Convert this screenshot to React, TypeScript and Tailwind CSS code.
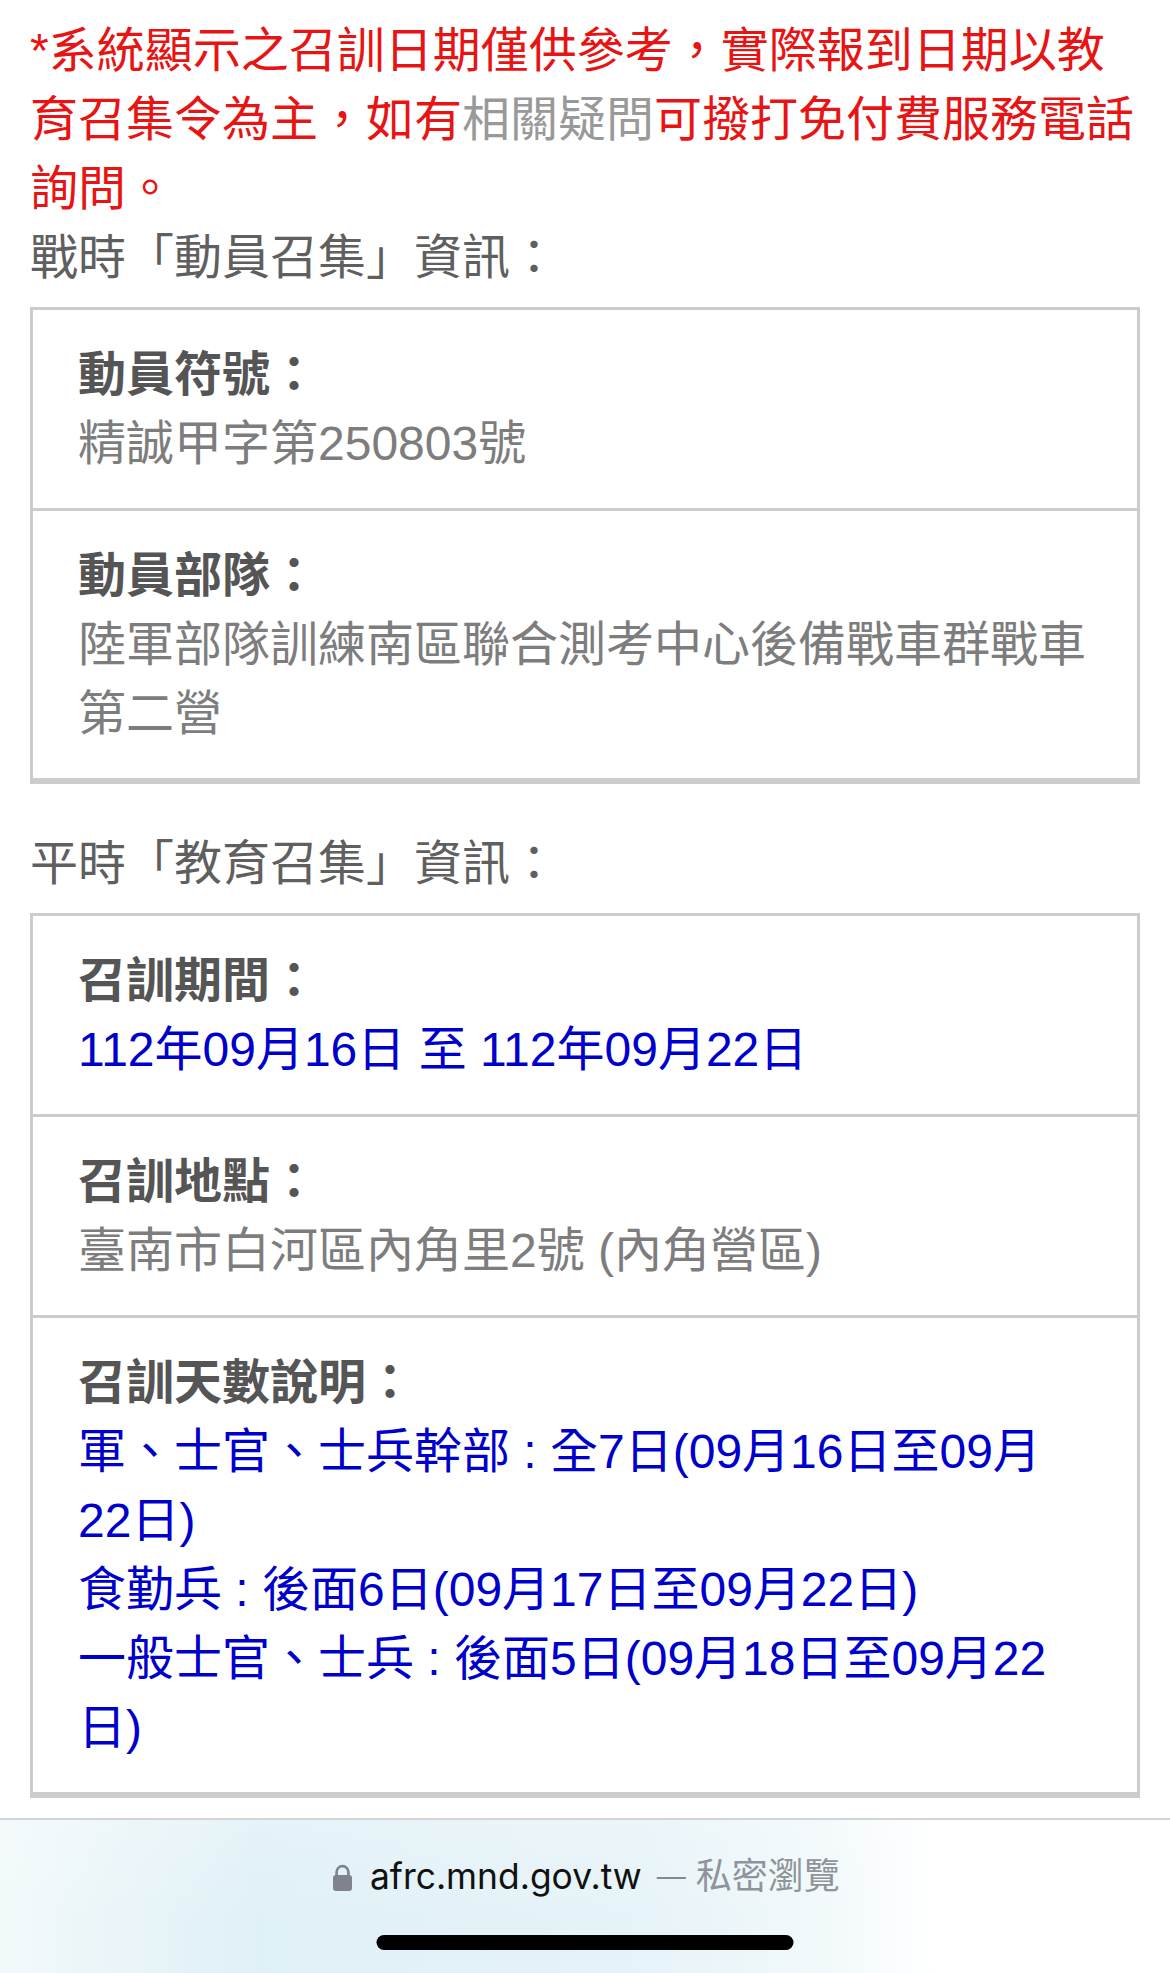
import React from "react";

function Cell({ label, children }: { label: string; children: React.ReactNode }) {
  return (
    <div className="pl-[45px] pr-[47px] pt-[30px] pb-[30px] text-[48px] leading-[69px]">
      <div className="font-bold text-[#555555]">{label}</div>
      {children}
    </div>
  );
}

export default function App() {
  return (
    <div className="font-['Liberation_Sans','Noto_Sans_CJK_TC',sans-serif] w-[1170px] h-[1973px] bg-white overflow-hidden flex flex-col">
      <div className="flex-1 pl-[30px] pr-[30px] pt-[16px] text-[48px] leading-[69px]">
        <div className="text-[#e81414]">
          *系統顯示之召訓日期僅供參考，實際報到日期以教育召集令為主，如有<span className="text-[#999999]">相關疑問</span>可撥打免付費服務電話詢問。
        </div>
        <div className="text-[#5f5f5f]">戰時「動員召集」資訊：</div>
        <div className="mt-[15px] border-[3px] border-[#cccccc] border-b-[6px]">
          <Cell label="動員符號：">
            <div className="text-[#7d7d7d]">精誠甲字第250803號</div>
          </Cell>
          <div className="border-t-[3px] border-[#cccccc]">
            <Cell label="動員部隊：">
              <div className="text-[#7d7d7d]">陸軍部隊訓練南區聯合測考中心後備戰車群戰車第二營</div>
            </Cell>
          </div>
        </div>
        <div className="mt-[45px] text-[#5f5f5f]">平時「教育召集」資訊：</div>
        <div className="mt-[15px] border-[3px] border-[#cccccc] border-b-[6px]">
          <Cell label="召訓期間：">
            <div className="text-[#0000cc]">112年09月16日 至 112年09月22日</div>
          </Cell>
          <div className="border-t-[3px] border-[#cccccc]">
            <Cell label="召訓地點：">
              <div className="text-[#7d7d7d]">臺南市白河區內角里2號 (內角營區)</div>
            </Cell>
          </div>
          <div className="border-t-[3px] border-[#cccccc]">
            <Cell label="召訓天數說明：">
              <div className="text-[#0000cc]">
                <div>軍、士官、士兵幹部 : 全7日(09月16日至09月22日)</div>
                <div>食勤兵 : 後面6日(09月17日至09月22日)</div>
                <div>一般士官、士兵 : 後面5日(09月18日至09月22日)</div>
              </div>
            </Cell>
          </div>
        </div>
      </div>
      <div className="relative h-[155px] shrink-0 border-t-2 border-[#d2d5d8] bg-[linear-gradient(180deg,rgba(255,255,255,0.2),rgba(255,255,255,0)_70%),linear-gradient(90deg,#f2f9fb_0%,#dff0f6_22%,#e6f3f8_55%,#f2f9fb_71%,#ffffff_80%)] pl-[333px]">
        <div className="mt-[32px] flex h-[50px] items-center text-[#111111]">
          <svg width="19" height="27" viewBox="0 0 19 27" fill="none" className="shrink-0">
            <path d="M3.6 12V8a5.9 5.9 0 0 1 11.8 0V12" stroke="#80838c" strokeWidth="2.6" />
            <rect x="0" y="11" width="19" height="16" rx="3" fill="#80838c" />
          </svg>
          <span className="ml-[18px] font-['Inter',sans-serif] text-[35.4px]">afrc.mnd.gov.tw</span>
          <span className="ml-[15px] text-[29px] text-[#83898e]">—</span>
          <span className="ml-[10px] text-[36px] text-[#8e9499]">私密瀏覽</span>
        </div>
        <div className="absolute bottom-[23px] left-1/2 -translate-x-1/2 w-[417px] h-[15px] rounded-full bg-black" />
      </div>
    </div>
  );
}
